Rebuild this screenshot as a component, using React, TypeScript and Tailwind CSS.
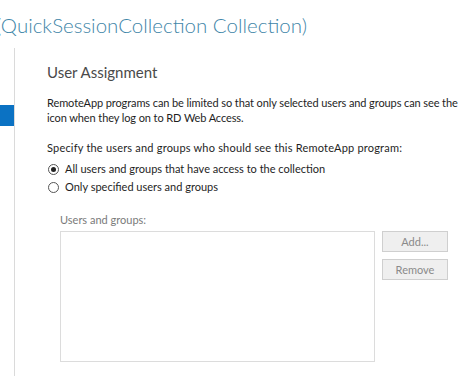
import { useState } from "react";

export default function App() {
    const [mode, setMode] = useState<"all" | "some">("all")

    return <div className="w-[474px] h-[376px] overflow-hidden bg-white font-['Lato','Noto_Sans',sans-serif] text-[#1e1e1e]">
        <div className="h-[48px] pt-[11px] -ml-[4px]">
            <h1 className="text-[20.5px] font-light text-[#3f86a8] leading-[28px] whitespace-nowrap">(QuickSessionCollection Collection)</h1>
        </div>

        <div className="flex h-[328px]">
            <div className="w-[15px] shrink-0 border-r border-[#dadada] pt-[57px]">
                <div className="w-[14px] h-[21px] bg-[#0b72c3]"></div>
            </div>

            <div className="pl-[32px] pt-[14px] flex-1">
                <h2 className="text-[15px] text-[#4a4a4a] leading-[20px]">User Assignment</h2>

                <p className="mt-[13px] text-[11px] leading-[15px] whitespace-nowrap tracking-[-0.1px]">
                    RemoteApp programs can be limited so that only selected users and groups can see the<br />
                    icon when they log on to RD Web Access.
                </p>

                <p className="mt-[15px] text-[11px] leading-[15px] tracking-[0.2px]">Specify the users and groups who should see this RemoteApp program:</p>

                <div className="mt-[6px] flex flex-col gap-[2px] text-[11px]">
                    <label className="flex items-center gap-[6px] h-[16px] cursor-pointer" onClick={() => setMode("all")}>
                        <span className="w-[11px] h-[11px] rounded-full border border-[#555] flex items-center justify-center ml-[1px]">
                            {mode === "all" && <span className="w-[5px] h-[5px] rounded-full bg-[#222]"></span>}
                        </span>
                        All users and groups that have access to the collection
                    </label>
                    <label className="flex items-center gap-[6px] h-[16px] cursor-pointer" onClick={() => setMode("some")}>
                        <span className="w-[11px] h-[11px] rounded-full border border-[#555] flex items-center justify-center ml-[1px]">
                            {mode === "some" && <span className="w-[5px] h-[5px] rounded-full bg-[#222]"></span>}
                        </span>
                        Only specified users and groups
                    </label>
                </div>

                <div className="pl-[13px] mt-[17px]">
                    <div className="text-[11px] text-[#7a7a7a] leading-[15px]">Users and groups:</div>
                    <div className="flex gap-[7px] mt-[4px]">
                        <div className="w-[315px] h-[131px] border border-[#dcdcdc] bg-white"></div>
                        <div className="flex flex-col gap-[7px]">
                            <button className="w-[66px] h-[21px] bg-[#efefef] border border-[#cfcfcf] text-[11px] text-[#8a8a8a] leading-none">Add...</button>
                            <button className="w-[66px] h-[21px] bg-[#efefef] border border-[#cfcfcf] text-[11px] text-[#8a8a8a] leading-none">Remove</button>
                        </div>
                    </div>
                </div>
            </div>
        </div>
    </div>
}
